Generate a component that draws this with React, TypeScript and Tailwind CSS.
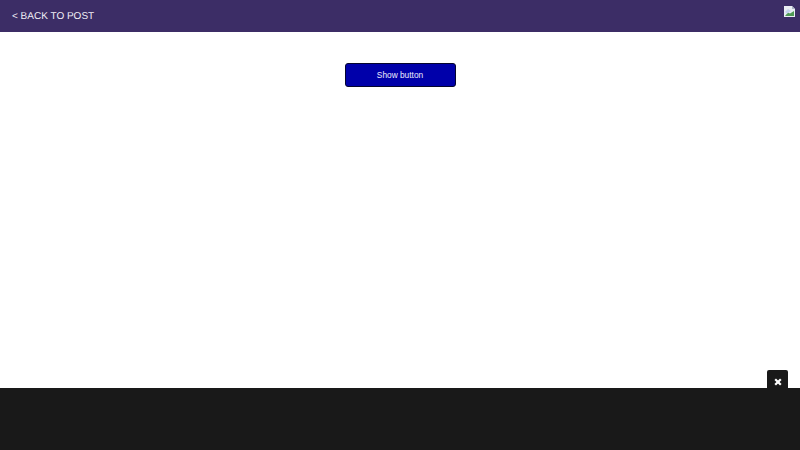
function BrokenImage() {
  return (
    <svg width="11" height="11" viewBox="0 0 11 11" className="block">
      <path d="M0 0H8L11 3V11H0Z" fill="#e9edf3" />
      <path d="M8 0V3H11Z" fill="#aab4c4" />
      <path d="M1 10L4 6.5L6 7.5L10 5V10Z" fill="#4f9a55" />
      <path d="M1 6L4 3L7 5L3 7.5Z" fill="#c3d3ee" />
    </svg>
  );
}

export default function App() {
  return (
    <div className="flex h-[450px] w-[800px] flex-col overflow-hidden bg-white font-['Liberation_Sans',Arial,sans-serif] [text-rendering:geometricPrecision]">
      <header className="flex h-8 items-start justify-between bg-[#3c2d66] pl-3 pr-[5px]">
        <a className="text-[10px] leading-[33px] text-[#f1eff6]">&lt; BACK TO POST</a>
        <div className="pt-[6px]">
          <BrokenImage />
        </div>
      </header>

      <main className="flex flex-1 justify-center pt-[31px]">
        <button className="h-6 w-[111px] rounded-[3px] border border-[#05052e] bg-[#0000aa] text-[8.33px] text-[#eeeeff]">
          Show button
        </button>
      </main>

      <footer className="relative h-[62.5px] bg-[#191919]">
        <div className="absolute right-3 top-[-18px] flex h-[18px] w-[21px] items-end justify-center rounded-t-[2px] bg-[#191919] pb-[2px]">
          <svg width="8" height="8" viewBox="0 0 8 8" className="block">
            <path d="M1.2 1.2L6.8 6.8M6.8 1.2L1.2 6.8" stroke="#fff" strokeWidth="2.2" />
          </svg>
        </div>
      </footer>
    </div>
  );
}
